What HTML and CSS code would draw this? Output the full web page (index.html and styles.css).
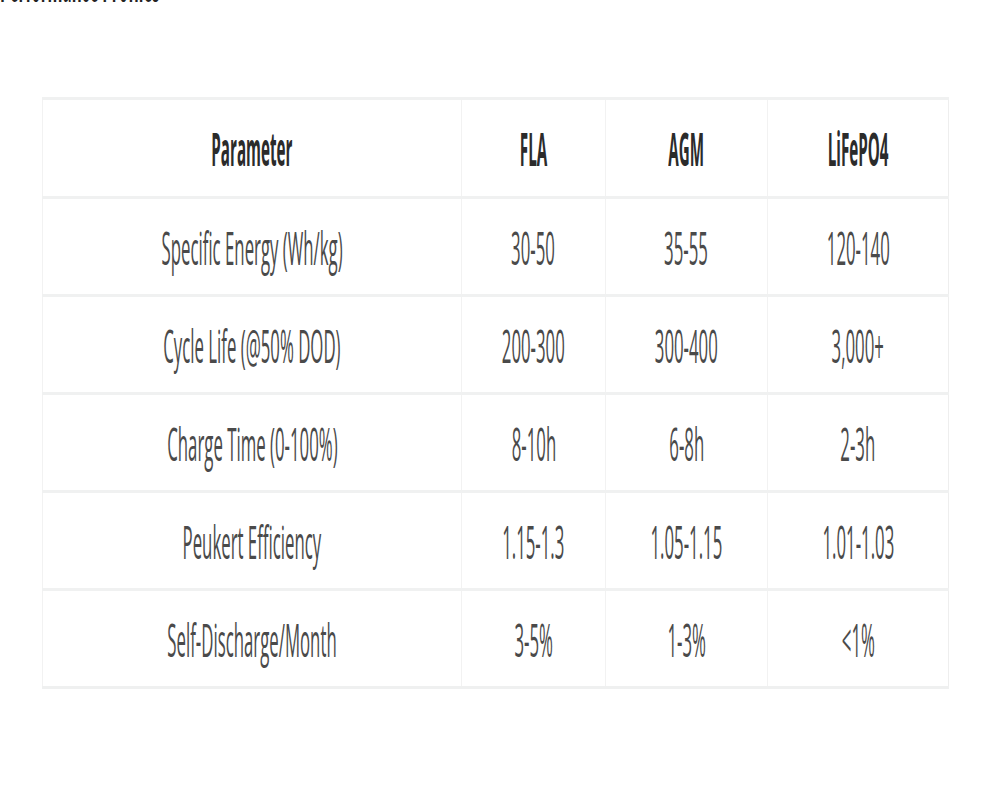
FILE: index.html
```html
<!DOCTYPE html>
<html>
<head>
<meta charset="utf-8">
<link rel="stylesheet" href="styles.css">
</head>
<body>
<div class="page">
  <h2 class="title"><span class="sq">Performance Profiles</span></h2>
  <table class="grid">
    <colgroup>
      <col class="c1"><col class="c2"><col class="c3"><col class="c4">
    </colgroup>
    <thead>
      <tr><th><div class="cell"><span class="sq">Parameter</span></div></th><th><div class="cell"><span class="sq">FLA</span></div></th><th><div class="cell"><span class="sq">AGM</span></div></th><th><div class="cell"><span class="sq">LiFePO4</span></div></th></tr>
    </thead>
    <tbody>
      <tr><td><div class="cell"><span class="sq">Specific Energy (Wh/kg)</span></div></td><td><div class="cell"><span class="sq">30-50</span></div></td><td><div class="cell"><span class="sq">35-55</span></div></td><td><div class="cell"><span class="sq">120-140</span></div></td></tr>
      <tr><td><div class="cell"><span class="sq">Cycle Life (@50% DOD)</span></div></td><td><div class="cell"><span class="sq">200-300</span></div></td><td><div class="cell"><span class="sq">300-400</span></div></td><td><div class="cell"><span class="sq">3,000+</span></div></td></tr>
      <tr><td><div class="cell"><span class="sq">Charge Time (0-100%)</span></div></td><td><div class="cell"><span class="sq">8-10h</span></div></td><td><div class="cell"><span class="sq">6-8h</span></div></td><td><div class="cell"><span class="sq">2-3h</span></div></td></tr>
      <tr><td><div class="cell"><span class="sq">Peukert Efficiency</span></div></td><td><div class="cell"><span class="sq">1.15-1.3</span></div></td><td><div class="cell"><span class="sq">1.05-1.15</span></div></td><td><div class="cell"><span class="sq">1.01-1.03</span></div></td></tr>
      <tr><td><div class="cell"><span class="sq">Self-Discharge/Month</span></div></td><td><div class="cell"><span class="sq">3-5%</span></div></td><td><div class="cell"><span class="sq">1-3%</span></div></td><td><div class="cell"><span class="sq">&lt;1%</span></div></td></tr>
    </tbody>
  </table>
</div>
</body>
</html>
```
FILE: styles.css
```css
html, body {
  margin: 0;
  padding: 0;
  background: #ffffff;
}
.page {
  font-family: "Open Sans", "Noto Sans", sans-serif;
  color: #444;
}
.title {
  margin: -39px 0 0 0;
  height: 46px;
  font-size: 46px;
  line-height: 46px;
  font-weight: 700;
  color: #222222;
  white-space: nowrap;
}
.title .sq {
  transform: scaleX(0.33);
  transform-origin: left center;
}
.cell {
  display: flex;
  justify-content: center;
  align-items: center;
  width: 100%;
}
.sq {
  display: inline-block;
  flex: none;
  white-space: nowrap;
  transform: scaleX(0.365);
  transform-origin: center center;
}
th .sq {
  transform: scaleX(0.33);
}
.grid {
  margin: 90px 0 0 42px;
  width: 906px;
  border-collapse: collapse;
  table-layout: fixed;
  border-top: 3px solid #f0f1f1;
  border-bottom: 3px solid #eff0f0;
  border-left: 1px solid #eeeeee;
  border-right: 1px solid #eeeeee;
}
.c1 { width: 419px; }
.c2 { width: 144px; }
.c3 { width: 162px; }
.c4 { width: 181px; }
th, td {
  height: 95px;
  padding: 0;
  text-align: center;
  vertical-align: middle;
  font-size: 46px;
  line-height: 50px;
  overflow: visible;
  border-left: 1px solid #f2f2f2;
  border-bottom: 3px solid #f0f1f1;
}
th {
  font-weight: 700;
  color: #2b2b2b;
  height: 96px;
}
td {
  font-weight: 400;
  color: #4a4a4a;
}
tbody tr:last-child td {
  border-bottom: 0;
}
```
